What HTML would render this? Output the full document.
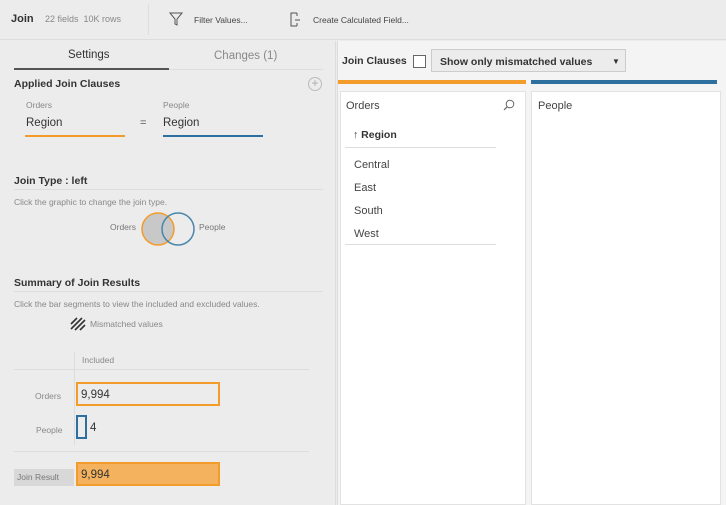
<!DOCTYPE html>
<html><head><style>
*{margin:0;padding:0;box-sizing:border-box}
body{width:726px;height:505px;overflow:hidden;background:#ececec;font-family:"Liberation Sans",sans-serif;color:#333;position:relative}
.a{position:absolute;white-space:nowrap}
</style></head><body>
<div class="a" style="left:0;top:0;width:726px;height:40px;background:#ececec;border-bottom:1px solid #ddd"></div>
<div class="a" style="left:11px;top:13px;font-size:11px;font-weight:bold;color:#333">Join</div>
<div class="a" style="left:45px;top:14px;font-size:9px;color:#888">22 fields&nbsp;&nbsp;10K rows</div>
<div class="a" style="left:148px;top:4px;width:1px;height:31px;background:#ddd"></div>
<svg class="a" style="left:169px;top:12px" width="14" height="14"><path d="M1 1H13L8 7V13L6 12V7Z" fill="none" stroke="#555" stroke-width="1"/></svg>
<div class="a" style="left:194px;top:15px;font-size:8.5px;color:#444">Filter Values...</div>
<svg class="a" style="left:290px;top:12px" width="12" height="16"><path d="M7 1H1V14H7M7 1V4M7 11V14M5 8H10" fill="none" stroke="#555" stroke-width="1"/></svg>
<div class="a" style="left:313px;top:15px;font-size:8.5px;color:#444">Create Calculated Field...</div>

<div class="a" style="left:0;top:41px;width:336px;height:464px;background:#ececec;border-right:1px solid #ddd"></div>
<div class="a" style="left:68px;top:49px;font-size:11.5px;color:#333">Settings</div>
<div class="a" style="left:214px;top:50px;font-size:11.5px;color:#888">Changes (1)</div>
<div class="a" style="left:14px;top:68px;width:155px;height:2px;background:#555"></div>
<div class="a" style="left:169px;top:69px;width:154px;height:1px;background:#ddd"></div>
<div class="a" style="left:14px;top:78px;font-size:10.5px;font-weight:bold;color:#333">Applied Join Clauses</div>
<div class="a" style="left:308px;top:77px;width:14px;height:14px;border:1px solid #bbb;border-radius:50%;font-size:12px;line-height:11px;text-align:center;color:#aaa">+</div>
<div class="a" style="left:26px;top:100px;font-size:8.5px;color:#888">Orders</div>
<div class="a" style="left:163px;top:100px;font-size:8.5px;color:#888">People</div>
<div class="a" style="left:26px;top:117px;font-size:11.5px;color:#333">Region</div>
<div class="a" style="left:140px;top:117px;font-size:11px;color:#555">=</div>
<div class="a" style="left:163px;top:117px;font-size:11.5px;color:#333">Region</div>
<div class="a" style="left:25px;top:135px;width:100px;height:2px;background:#f39c2c"></div>
<div class="a" style="left:163px;top:135px;width:100px;height:2px;background:#2d6f9e"></div>
<div class="a" style="left:14px;top:175px;font-size:10.5px;font-weight:bold;color:#333">Join Type : left</div>
<div class="a" style="left:14px;top:189px;width:309px;height:1px;background:#ddd"></div>
<div class="a" style="left:14px;top:197px;font-size:8.5px;color:#888">Click the graphic to change the join type.</div>
<div class="a" style="left:110px;top:222px;font-size:8.5px;color:#777">Orders</div>
<div class="a" style="left:199px;top:222px;font-size:8.5px;color:#777">People</div>
<svg class="a" style="left:140px;top:211px" width="58" height="36"><circle cx="18" cy="18" r="16" fill="#c8c8c8" stroke="#f39c2c" stroke-width="1.5"/><circle cx="38" cy="18" r="16" fill="none" stroke="#4a86aa" stroke-width="1.5"/></svg>
<div class="a" style="left:14px;top:277px;font-size:10.5px;font-weight:bold;color:#333">Summary of Join Results</div>
<div class="a" style="left:14px;top:291px;width:309px;height:1px;background:#ddd"></div>
<div class="a" style="left:14px;top:299px;font-size:8.5px;color:#888">Click the bar segments to view the included and excluded values.</div>
<svg class="a" style="left:70px;top:317px" width="16" height="14"><path d="M1 7L7 1M1 12L12 1M5 13L15 3M10 13L15 8" stroke="#333" stroke-width="1.6"/></svg>
<div class="a" style="left:90px;top:319px;font-size:8.5px;color:#888">Mismatched values</div>
<div class="a" style="left:74px;top:352px;width:1px;height:93px;background:#ddd"></div>
<div class="a" style="left:82px;top:355px;font-size:8.5px;color:#888">Included</div>
<div class="a" style="left:14px;top:369px;width:295px;height:1px;background:#ddd"></div>
<div class="a" style="left:35px;top:391px;font-size:8.5px;color:#888">Orders</div>
<div class="a" style="left:76px;top:382px;width:144px;height:24px;border:2px solid #f39c2c;background:#ececec;font-size:11.5px;padding:5px 0 0 3px">9,994</div>
<div class="a" style="left:36px;top:425px;font-size:8.5px;color:#888">People</div>
<div class="a" style="left:76px;top:415px;width:11px;height:24px;border:2px solid #2d6f9e;background:#ececec"></div>
<div class="a" style="left:90px;top:422px;font-size:11.5px">4</div>
<div class="a" style="left:14px;top:451px;width:295px;height:1px;background:#ddd"></div>
<div class="a" style="left:14px;top:469px;width:60px;height:17px;background:#d8d8d8;font-size:8.5px;color:#777;padding:3px 0 0 3px">Join Result</div>
<div class="a" style="left:76px;top:462px;width:144px;height:24px;border:2px solid #f39c2c;background:#f4b25e;font-size:11.5px;padding:5px 0 0 3px">9,994</div>

<div class="a" style="left:337px;top:41px;width:389px;height:464px;background:#f4f4f4;border-left:1px solid #ddd"></div>
<div class="a" style="left:342px;top:55px;font-size:10.5px;font-weight:bold;color:#333">Join Clauses</div>
<div class="a" style="left:413px;top:55px;width:13px;height:13px;border:1px solid #666;background:#fff"></div>
<div class="a" style="left:431px;top:49px;width:195px;height:23px;border:1px solid #ccc;background:#ececec;font-size:10.5px;font-weight:bold;color:#333;padding:6px 0 0 8px">Show only mismatched values<span style="position:absolute;left:180px;top:7px;font-size:8px">▼</span></div>
<div class="a" style="left:338px;top:80px;width:188px;height:4px;background:#f39c2c"></div>
<div class="a" style="left:531px;top:80px;width:186px;height:4px;background:#2d6f9e"></div>
<div class="a" style="left:340px;top:91px;width:186px;height:414px;background:#fff;border:1px solid #e2e2e2"></div>
<div class="a" style="left:531px;top:91px;width:190px;height:414px;background:#fff;border:1px solid #e2e2e2"></div>
<div class="a" style="left:346px;top:100px;font-size:11px;color:#444">Orders</div>
<svg class="a" style="left:503px;top:99px" width="12" height="12"><circle cx="7" cy="5" r="3.8" fill="none" stroke="#666" stroke-width="1"/><path d="M4.3 7.7L1 11" stroke="#666" stroke-width="1.2"/></svg>
<div class="a" style="left:353px;top:129px;font-size:10.5px;font-weight:bold;color:#333">↑ Region</div>
<div class="a" style="left:345px;top:147px;width:151px;height:1px;background:#ddd"></div>
<div class="a" style="left:354px;top:159px;font-size:11px;color:#444">Central</div>
<div class="a" style="left:354px;top:182px;font-size:11px;color:#444">East</div>
<div class="a" style="left:354px;top:205px;font-size:11px;color:#444">South</div>
<div class="a" style="left:354px;top:228px;font-size:11px;color:#444">West</div>
<div class="a" style="left:345px;top:244px;width:151px;height:1px;background:#ddd"></div>
<div class="a" style="left:538px;top:100px;font-size:11px;color:#444">People</div>
</body></html>
